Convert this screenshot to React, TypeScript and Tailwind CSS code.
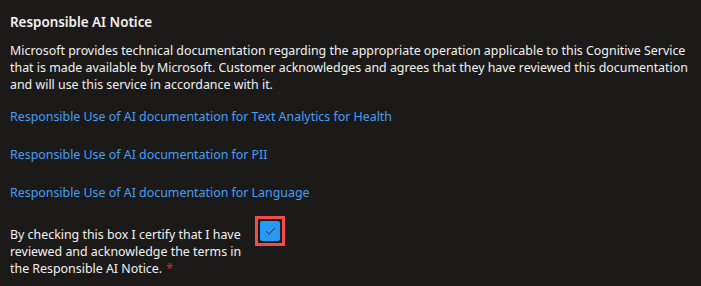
import { Check } from "lucide-react";

const links = [
  "Responsible Use of AI documentation for Text Analytics for Health",
  "Responsible Use of AI documentation for PII",
  "Responsible Use of AI documentation for Language",
];

export default function App() {
  return (
    <div
      className="w-[701px] h-[286px] bg-[#1b1a19] text-[#f3f2f1] px-[10px] pt-[12px] text-[12.4px] leading-[17px] overflow-hidden"
      style={{ fontFamily: '"Noto Sans", "Open Sans", sans-serif' }}
    >
      <h2 className="text-[13.4px] font-semibold leading-[20px]">Responsible AI Notice</h2>

      <p className="mt-[10px]">
        Microsoft provides technical documentation regarding the appropriate operation applicable to this Cognitive Service
        that is made available by Microsoft. Customer acknowledges and agrees that they have reviewed this documentation
        and will use this service in accordance with it.
      </p>

      <div className="mt-[15px] flex flex-col gap-[21px]">
        {links.map((l) => (
          <a key={l} href="#" className="text-[#479ef5] leading-[17px] w-fit">
            {l}
          </a>
        ))}
      </div>

      <div className="mt-[25px] flex items-start">
        <p className="w-[240px]">
          By checking this box I certify that I have reviewed and acknowledge the terms in the Responsible AI Notice.
          <span className="text-[#e81c2e] pl-[4px]">*</span>
        </p>
        <div className="ml-[5px] -mt-[10px] border-[3px] border-[#f04c4c] p-[2px]">
          <div className="w-[20px] h-[20px] rounded-[2px] bg-[#2899f5] flex items-center justify-center">
            <Check className="w-[13px] h-[13px] text-[#1f2a36]" strokeWidth={1.75} />
          </div>
        </div>
      </div>
    </div>
  );
}
